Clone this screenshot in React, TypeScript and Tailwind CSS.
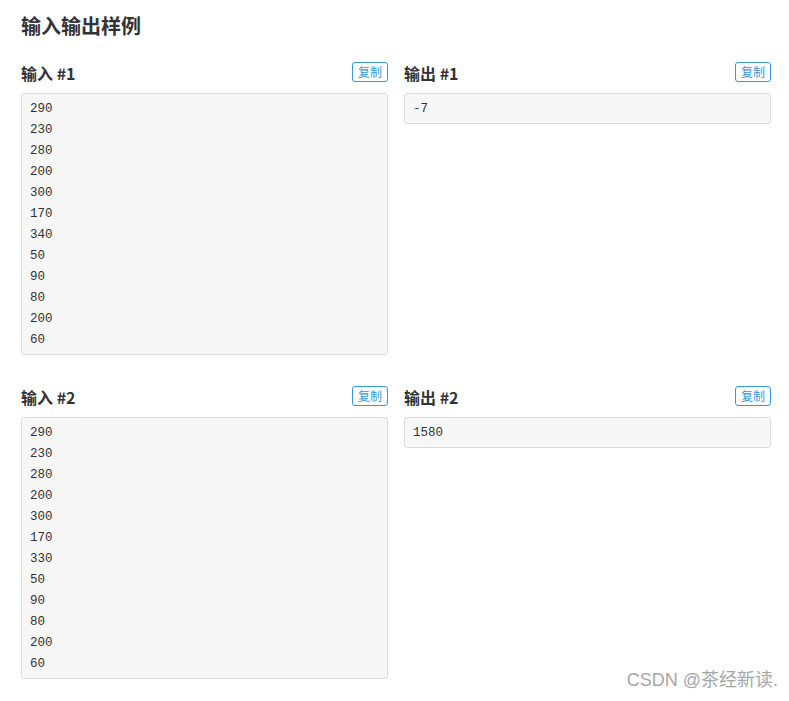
import React from 'react';

const samples = [
  {
    id: 1,
    input: ['290', '230', '280', '200', '300', '170', '340', '50', '90', '80', '200', '60'],
    output: ['-7'],
  },
  {
    id: 2,
    input: ['290', '230', '280', '200', '300', '170', '330', '50', '90', '80', '200', '60'],
    output: ['1580'],
  },
];

function Block({ title, lines }: { title: string; lines: string[] }) {
  return (
    <div className="flex-1 min-w-0">
      <div className="flex items-start justify-between h-[31px]">
        <h3 className="text-[16px] font-bold text-[#333] leading-[24px] -mt-[1px]">{title}</h3>
        <button className="h-[20px] px-[5px] border border-[#3498db] rounded-[3px] text-[12px] leading-[18px] text-[#3498db] bg-white">
          复制
        </button>
      </div>
      <pre className="bg-[#f7f7f7] border border-[#ddd] rounded-[3px] px-[8px] pt-[5px] pb-[3px] text-[12.5px] leading-[21px] text-[#333] font-['Liberation_Mono','DejaVu_Sans_Mono',monospace]">
        {lines.join('\n')}
      </pre>
    </div>
  );
}

export default function App() {
  return (
    <div className="relative w-[789px] h-[701px] bg-white px-[21px] pt-[12px] font-['Noto_Sans_CJK_SC','Noto_Sans',sans-serif]">
      <h2 className="text-[20px] font-bold text-[#333] leading-[28px] mb-[22px]">输入输出样例</h2>
      <div className="flex flex-col gap-[31px] w-[750px]">
        {samples.map((s) => (
          <div key={s.id} className="flex items-start gap-[16px]">
            <Block title={`输入 #${s.id}`} lines={s.input} />
            <Block title={`输出 #${s.id}`} lines={s.output} />
          </div>
        ))}
      </div>
      <div className="absolute right-[11px] bottom-[7px] text-[18px] text-[#a6a6a6] font-['Liberation_Sans','Noto_Sans_CJK_SC',sans-serif]">
        CSDN @茶经新读.
      </div>
    </div>
  );
}
